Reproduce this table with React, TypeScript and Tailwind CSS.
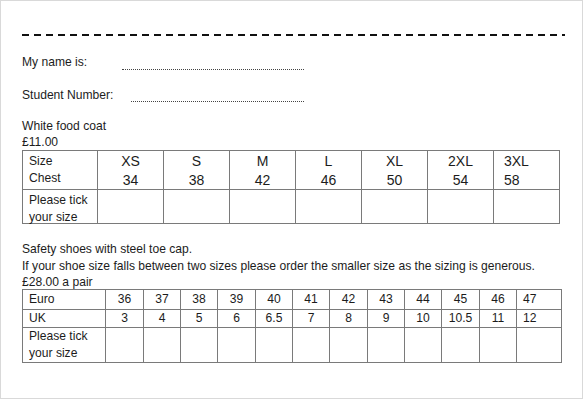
import React from "react";

const coatSizes = [
  { size: "XS", chest: "34" },
  { size: "S", chest: "38" },
  { size: "M", chest: "42" },
  { size: "L", chest: "46" },
  { size: "XL", chest: "50" },
  { size: "2XL", chest: "54" },
  { size: "3XL", chest: "58", left: true },
];

const shoeSizes = [
  { euro: "36", uk: "3", w: "w-[38px]" },
  { euro: "37", uk: "4", w: "w-[37px]" },
  { euro: "38", uk: "5", w: "w-[37px]" },
  { euro: "39", uk: "6", w: "w-[38px]" },
  { euro: "40", uk: "6.5", w: "w-[37px]" },
  { euro: "41", uk: "7", w: "w-[37px]" },
  { euro: "42", uk: "8", w: "w-[38px]" },
  { euro: "43", uk: "9", w: "w-[37px]" },
  { euro: "44", uk: "10", w: "w-[37px]" },
  { euro: "45", uk: "10.5", w: "w-[38px]" },
  { euro: "46", uk: "11", w: "w-[37px]" },
  { euro: "47", uk: "12", w: "w-[45px]", left: true },
];

const cell = "border border-[#7a7a7a] p-0 align-top";

export default function App() {
  return (
    <div className="w-[585px] h-[400px] bg-white font-['Liberation_Sans',Arial,sans-serif] text-[12.1px] leading-[17px] text-[#1c1c1c]">
      <div className="w-[583px] h-[399px] border border-[#d9d9d9] pl-[21px] pt-[33px]">
        {/* cut line */}
        <div className="h-[2px] w-[543px] bg-[repeating-linear-gradient(90deg,#111_0_7px,transparent_7px_12px)]" />

        <div className="mt-[18px] flex h-[17px]">
          <span className="w-[100px]">My name is:</span>
          <span className="w-[182px] h-[16px] border-b border-dotted border-[#444]" />
        </div>
        <div className="mt-[16px] flex h-[17px]">
          <span className="w-[109px]">Student Number:</span>
          <span className="w-[173px] h-[15px] border-b border-dotted border-[#444]" />
        </div>

        <div className="mt-[14px]">White food coat</div>
        <div className="-mt-[1px] h-[16px]">£11.00</div>

        <table className="table-fixed border-collapse w-[536px]">
          <colgroup>
            <col className="w-[75px]" />
            {coatSizes.map((c) => (
              <col key={c.size} className="w-[66px]" />
            ))}
          </colgroup>
          <tbody>
            <tr>
              <td className={cell}>
                <div className="h-[38px] pl-[6px] pt-[2px]">
                  <div>Size</div>
                  <div>Chest</div>
                </div>
              </td>
              {coatSizes.map((c) => (
                <td key={c.size} className={cell}>
                  <div
                    className={`h-[38px] pt-[1px] text-[14px] leading-[19px] ${c.left ? "pl-[10px] text-left" : "text-center"}`}
                  >
                    <div>{c.size}</div>
                    <div>{c.chest}</div>
                  </div>
                </td>
              ))}
            </tr>
            <tr>
              <td className={cell}>
                <div className="h-[33px] pl-[6px] pt-[2px]">
                  <div>Please tick</div>
                  <div>your size</div>
                </div>
              </td>
              {coatSizes.map((c) => (
                <td key={c.size} className={cell} />
              ))}
            </tr>
          </tbody>
        </table>

        <div className="mt-[17px]">Safety shoes with steel toe cap.</div>
        <div>
          If your shoe size falls between two sizes please order the smaller size as the sizing is generous.
        </div>
        <div className="-mt-[1px] h-[15px]">£28.00 a pair</div>

        <table className="table-fixed border-collapse w-[539px]">
          <colgroup>
            <col className="w-[83px]" />
            {shoeSizes.map((s) => (
              <col key={s.euro} className={s.w} />
            ))}
          </colgroup>
          <tbody>
            <tr className="h-[20px]">
              <td className={cell}>
                <div className="pl-[6px] pt-[1px]">Euro</div>
              </td>
              {shoeSizes.map((s) => (
                <td key={s.euro} className={cell}>
                  <div className={`pt-[1px] ${s.left ? "pl-[6px] text-left" : "text-center"}`}>{s.euro}</div>
                </td>
              ))}
            </tr>
            <tr className="h-[17px]">
              <td className={cell}>
                <div className="pl-[6px]">UK</div>
              </td>
              {shoeSizes.map((s) => (
                <td key={s.euro} className={cell}>
                  <div className={s.left ? "pl-[6px] text-left" : "text-center"}>{s.uk}</div>
                </td>
              ))}
            </tr>
            <tr className="h-[32px]">
              <td className={cell}>
                <div className="pl-[6px]">
                  <div>Please tick</div>
                  <div>your size</div>
                </div>
              </td>
              {shoeSizes.map((s) => (
                <td key={s.euro} className={cell} />
              ))}
            </tr>
          </tbody>
        </table>
      </div>
    </div>
  );
}
